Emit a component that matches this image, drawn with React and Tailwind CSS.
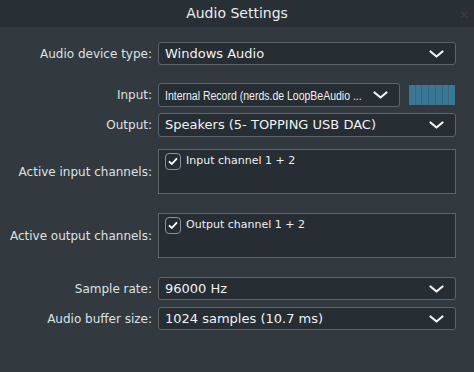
import { useState } from "react";

const font = { fontFamily: '"DejaVu Sans", Verdana, sans-serif' };

function Chevron() {
  return (
    <svg width="15" height="8" viewBox="0 0 15 8" className="shrink-0">
      <path d="M1.5 1.5 L7.5 6.5 L13.5 1.5" fill="none" stroke="#f2f2f2" strokeWidth="2.2" strokeLinecap="round" strokeLinejoin="round" />
    </svg>
  );
}

function Combo({ value, h = "h-[23px]", w = "w-[298px]", small }) {
  return (
    <div className={`${w} ${h} flex items-center justify-between rounded-[3px] border border-[#5d656b] bg-[#262d33] pl-[6px] pr-[11px]`}>
      {small ? (
        <div className="w-0 flex-1 overflow-visible">
          <span
            className="inline-block origin-left scale-x-[0.84] text-[12.5px] text-[#eef0f1] whitespace-nowrap"
            style={{ fontFamily: '"Liberation Sans", Arial, sans-serif' }}
          >
            {value}
          </span>
        </div>
      ) : (
        <span className="text-[13px] text-[#f0f2f3] whitespace-nowrap">{value}</span>
      )}
      <Chevron />
    </div>
  );
}

function Row({ label, children, className = "" }) {
  return (
    <div className={`flex items-center ${className}`}>
      <div className="w-[152px] text-right text-[12px] text-[#dde1e3] whitespace-nowrap">{label}</div>
      <div className="ml-[6px] flex items-center">{children}</div>
    </div>
  );
}

function ChannelBox({ text, checked, onToggle }) {
  return (
    <div className="w-[298px] h-[45px] border border-[#5d656b] bg-[#262d33] pl-[6px] pt-[3px]">
      <div className="flex items-center gap-[5px] cursor-pointer" onClick={onToggle}>
        <div className="w-[16px] h-[17px] rounded-[4px] border border-[#8c9398] flex items-center justify-center">
          {checked && (
            <svg width="10" height="9" viewBox="0 0 10 9">
              <path d="M1.5 4.8 L3.9 7 L8.5 1.8" fill="none" stroke="#ffffff" strokeWidth="1.8" strokeLinecap="round" strokeLinejoin="round" />
            </svg>
          )}
        </div>
        <span className="text-[11px] text-[#eef0f1]">{text}</span>
      </div>
    </div>
  );
}

export default function App() {
  const [inCh, setInCh] = useState(true);
  const [outCh, setOutCh] = useState(true);

  return (
    <div className="w-[474px] h-[372px] bg-[#323a40] overflow-hidden" style={font}>
      <div className="relative h-[27px] bg-[#283035] flex items-center justify-center">
        <span className="text-[14px] text-[#eceeef]">Audio Settings</span>
        <span className="absolute right-[5px] top-[6px] text-[12px] text-[#5e3540] opacity-80">✕</span>
      </div>

      <Row label="Audio device type:" className="mt-[15px]">
        <Combo value="Windows Audio" />
      </Row>

      <Row label="Input:" className="mt-[18px]">
        <Combo value="Internal Record (nerds.de LoopBeAudio ..." w="w-[242px]" h="h-[24px]" small />
        <div className="ml-[9px] w-[46px] h-[20px] flex gap-[1px] bg-[#336881]">
          {[0, 1, 2, 3, 4, 5, 6].map((i) => (
            <div key={i} className="flex-1 bg-[#3b7694]" />
          ))}
        </div>
      </Row>

      <Row label="Output:" className="mt-[6px]">
        <Combo value="Speakers (5- TOPPING USB DAC)" h="h-[24px]" />
      </Row>

      <Row label="Active input channels:" className="mt-[12px]">
        <ChannelBox text="Input channel 1 + 2" checked={inCh} onToggle={() => setInCh(!inCh)} />
      </Row>

      <Row label="Active output channels:" className="mt-[19px]">
        <ChannelBox text="Output channel 1 + 2" checked={outCh} onToggle={() => setOutCh(!outCh)} />
      </Row>

      <Row label="Sample rate:" className="mt-[19px]">
        <Combo value="96000 Hz" />
      </Row>

      <Row label="Audio buffer size:" className="mt-[7px]">
        <Combo value="1024 samples (10.7 ms)" />
      </Row>
    </div>
  );
}
